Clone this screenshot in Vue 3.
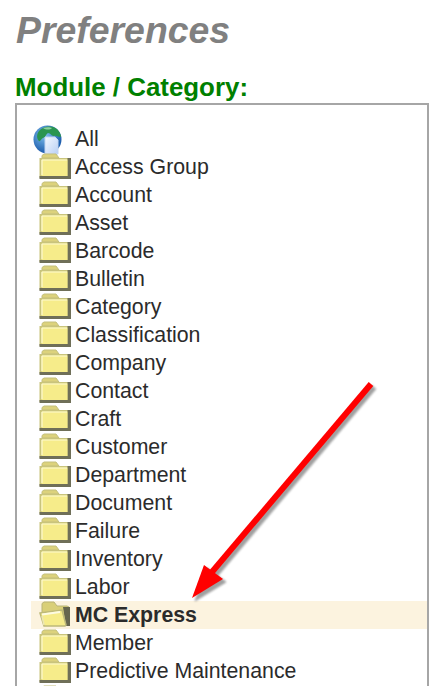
<script setup>
const items = ['Access Group','Account','Asset','Barcode','Bulletin','Category','Classification','Company','Contact','Craft','Customer','Department','Document','Failure','Inventory','Labor','MC Express','Member','Predictive Maintenance','']
</script>

<template>
  <div class="page">
    <h1 class="title">Preferences</h1>
    <h2 class="label">Module / Category:</h2>
    <div class="box">
      <div class="row">
        <span class="slot">
          <svg class="globe" width="30" height="30" viewBox="0 0 30 30">
            <defs>
              <radialGradient id="sea" cx="0.4" cy="0.35" r="0.75">
                <stop offset="0" stop-color="#7fc0ee" />
                <stop offset="1" stop-color="#0b4aa0" />
              </radialGradient>
              <linearGradient id="doc" x1="0" y1="0" x2="1" y2="1">
                <stop offset="0" stop-color="#f4f8ff" />
                <stop offset="1" stop-color="#b9d0f4" />
              </linearGradient>
            </defs>
            <circle cx="14.5" cy="14.5" r="14" fill="url(#sea)" />
            <path d="M6 6c4-5 13-6 18-2 2 2 4 5 4 8-3 0-5-2-7-1-3 0-3-3-6-3-2 1-2 4-5 5-2 1-3 4-4 3-2-2-3-6 0-10z" fill="#2a9550" />
            <path d="M10 3c3-1 7-1 9 0-2 2-6 2-9 0z" fill="#8fd0a0" />
            <path d="M12 12h10l3 3v14H12z" fill="url(#doc)" stroke="#c2d5f2" />
          </svg>
        </span>
        <span class="name">All</span>
      </div>
      <div v-for="(item, i) in items" :key="i" class="row" :class="{ selected: item === 'MC Express' }">
        <span class="slot">
          <svg v-if="item === 'MC Express'" class="folder" width="32" height="26" viewBox="0 0 32 26">
            <path d="M3 11V2.5L5 1h10l3 4h10l2 1v18H6z" fill="#d9cf78" stroke="#b9b477" />
            <path d="M24 6h7v19h-4z" fill="#66664e" />
            <path d="M1 12l22-3 4 15-1 1H5z" fill="#f6ec8a" stroke="#bdb97a" stroke-width="1.5" />
            <path d="M3 13.5l18-2.5" stroke="#fdfbe2" stroke-width="2" />
            <path d="M3 15l2 9" stroke="#ece7b4" stroke-width="1.5" />
          </svg>
          <svg v-else class="folder" width="32" height="26" viewBox="0 0 32 26">
            <path d="M3 5V2.5L5 1h12l3 4z" fill="#dcd27c" stroke="#c4bf7c" />
            <rect x="0.5" y="5" width="30" height="20" fill="#c9c47c" />
            <rect x="28.5" y="5" width="3.5" height="21" fill="#6f6f58" />
            <rect x="0.5" y="23" width="31.5" height="3" fill="#6f6f58" />
            <rect x="2.5" y="6.5" width="26" height="16.5" fill="#f6ec8a" />
            <path d="M3 7h25M3 7v15" stroke="#fdf9d0" stroke-width="1.2" fill="none" />
          </svg>
        </span>
        <span v-if="item" class="name">{{ item }}</span>
      </div>
    </div>
    <svg class="arrow" width="442" height="686" viewBox="0 0 442 686">
      <defs>
        <filter id="soft" x="-20%" y="-20%" width="140%" height="140%">
          <feGaussianBlur stdDeviation="1.2" />
        </filter>
      </defs>
      <g fill="#777" stroke="#777" opacity="0.7" filter="url(#soft)" transform="translate(3 3)">
        <path d="M371 384L212 572" stroke-width="6" fill="none" />
        <path d="M192 598L204 565L223 579z" />
      </g>
      <path d="M371 384L212 572" stroke="#ff0000" stroke-width="6" fill="none" />
      <path d="M192 598L204 565L223 579z" fill="#ff0000" />
    </svg>
  </div>
</template>

<style>
html, body { margin: 0; background: #fff; }
</style>

<style scoped>
.page {
  position: relative;
  width: 442px;
  height: 686px;
  overflow: hidden;
  background: #fff;
  font-family: "Liberation Sans", Arial, sans-serif;
  padding-left: 15px;
  box-sizing: border-box;
}
.title {
  margin: 0;
  padding: 9px 0 0 1px;
  height: 62px;
  box-sizing: border-box;
  font-size: 37.4px;
  line-height: 42px;
  font-weight: bold;
  font-style: italic;
  color: #808080;
}
.label {
  margin: 0;
  height: 41px;
  padding-top: 11px;
  box-sizing: border-box;
  font-size: 25.9px;
  line-height: 28px;
  font-weight: bold;
  color: #008000;
}
.box {
  width: 414px;
  height: 640px;
  box-sizing: border-box;
  border: 2px solid #a6a6a6;
  padding: 20px 0 0 14px;
}
.row {
  display: flex;
  align-items: center;
  height: 28px;
}
.selected {
  background: #fcf3df;
}
.selected .name {
  font-weight: bold;
}
.slot {
  width: 40px;
  height: 28px;
  flex: none;
  display: flex;
  align-items: flex-start;
  justify-content: flex-end;
  position: relative;
}
.folder {
  display: block;
}
.globe {
  position: absolute;
  left: 2px;
  top: 0;
}
.name {
  margin-left: 4px;
  font-size: 21.3px;
  line-height: 28px;
  color: #2b2b2b;
  white-space: nowrap;
}
.arrow {
  position: absolute;
  left: 0;
  top: 0;
  pointer-events: none;
}
</style>
